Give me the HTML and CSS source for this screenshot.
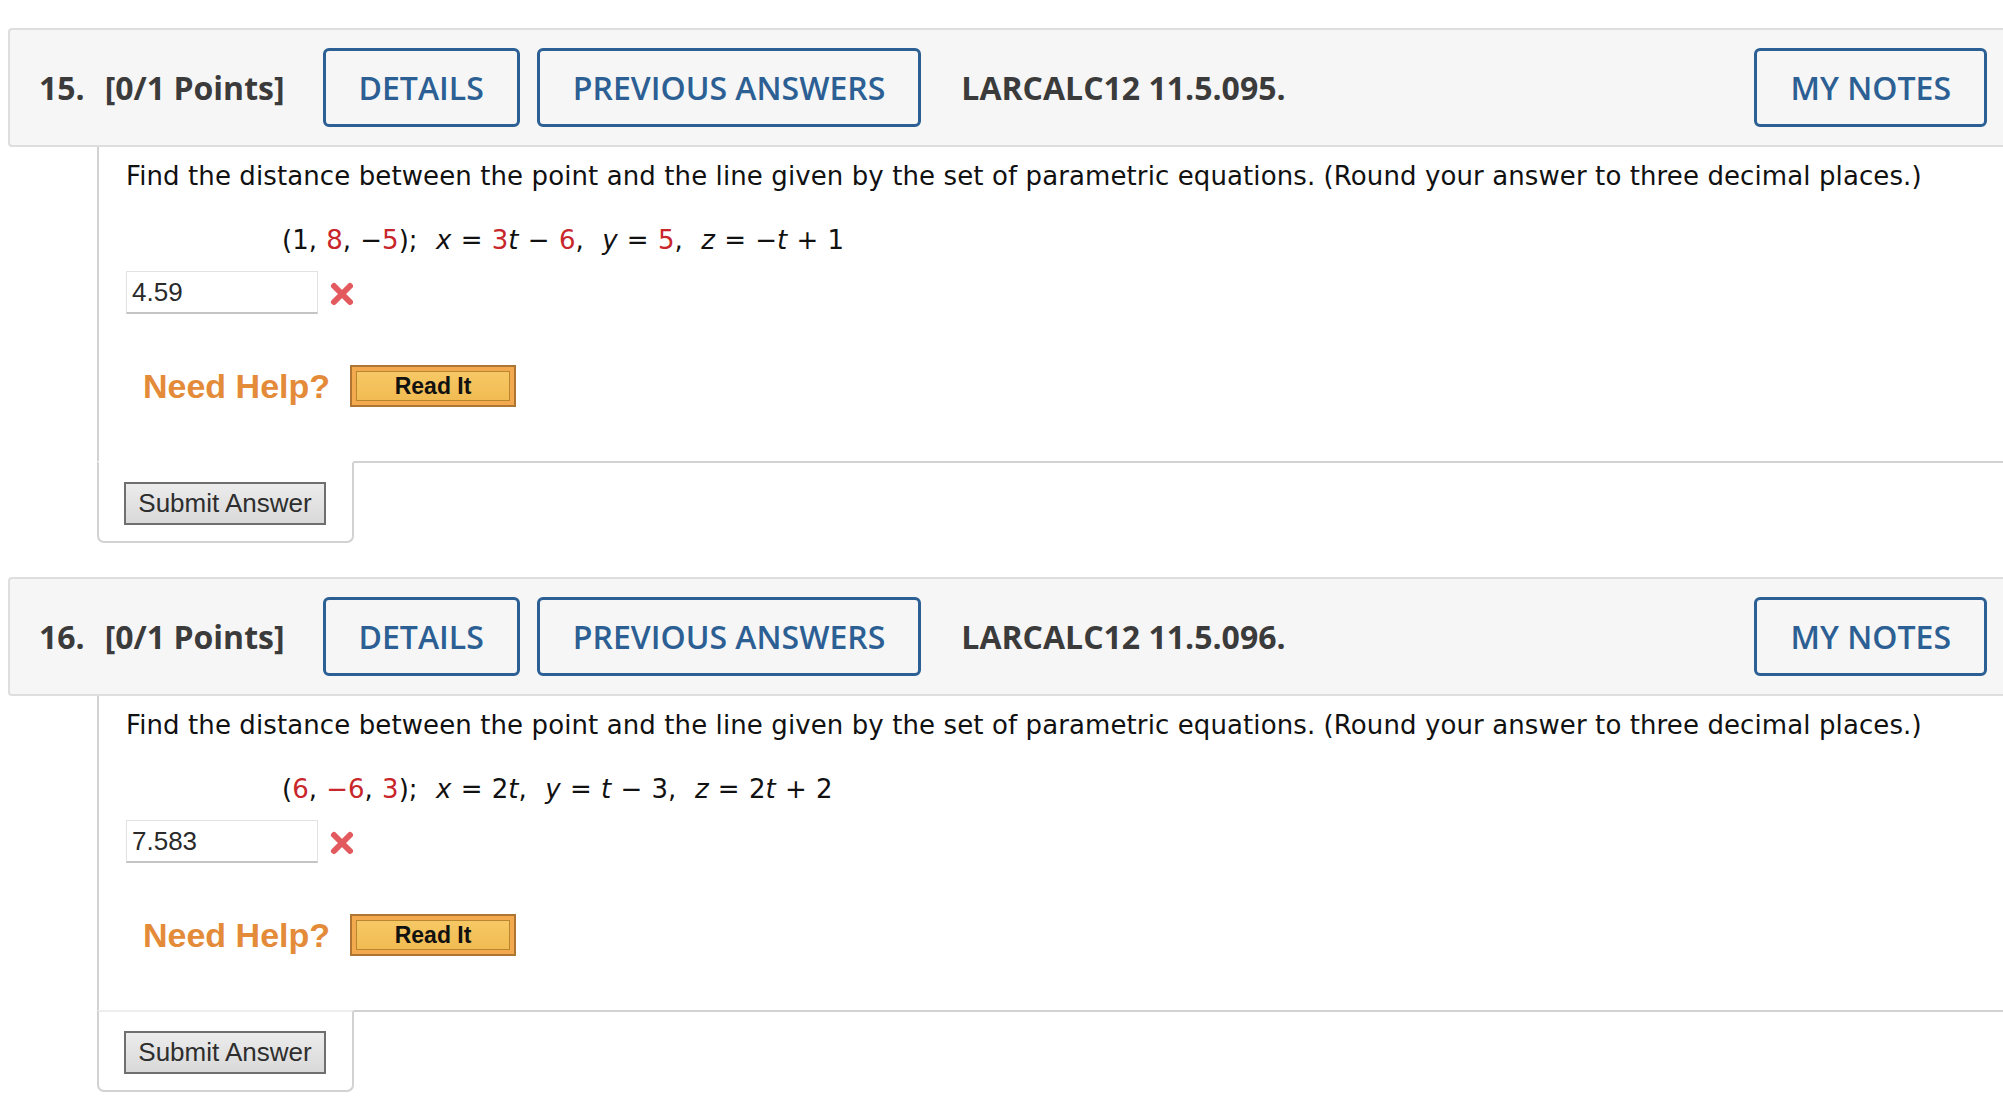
FILE: index.html
```html
<!DOCTYPE html>
<html>
<head>
<meta charset="utf-8">
<link rel="stylesheet" href="styles.css">
</head>
<body>
<div class="page">
  <div class="question">
    <div class="qhead">
      <span class="qnum">15.</span>
      <span class="qpts">[0/1 Points]</span>
      <span class="btn btn-details">DETAILS</span>
      <span class="btn btn-prev">PREVIOUS ANSWERS</span>
      <span class="qcode">LARCALC12 11.5.095.</span>
      <span class="btn btn-notes">MY NOTES</span>
    </div>
    <div class="qbody">
      <div class="qcontent">
        <p class="qtext">Find the distance between the point and the line given by the set of parametric equations. (Round your answer to three decimal places.)</p>
        <p class="eqn">(1, <span class="r">8</span>, −<span class="r">5</span>);&nbsp; <i>x</i> = <span class="r">3</span><i>t</i> − <span class="r">6</span>,&nbsp; <i>y</i> = <span class="r">5</span>,&nbsp; <i>z</i> = −<i>t</i> + 1</p>
        <div class="answer">
          <div class="inp">4.59</div>
          <svg class="wrong" viewBox="0 0 26 26" width="26" height="26"><path d="M5 5 L21 21 M21 5 L5 21" stroke="#e35a5e" stroke-width="6" stroke-linecap="round"/></svg>
        </div>
        <div class="help">
          <span class="needhelp">Need Help?</span>
          <span class="readit"><span class="readit-in">Read It</span></span>
        </div>
      </div>
      <div class="qfoot">
        <div class="submit-cell"><span class="submit">Submit Answer</span></div>
        <div class="filler"></div>
      </div>
    </div>
  </div>

  <div class="question">
    <div class="qhead">
      <span class="qnum">16.</span>
      <span class="qpts">[0/1 Points]</span>
      <span class="btn btn-details">DETAILS</span>
      <span class="btn btn-prev">PREVIOUS ANSWERS</span>
      <span class="qcode">LARCALC12 11.5.096.</span>
      <span class="btn btn-notes">MY NOTES</span>
    </div>
    <div class="qbody">
      <div class="qcontent">
        <p class="qtext">Find the distance between the point and the line given by the set of parametric equations. (Round your answer to three decimal places.)</p>
        <p class="eqn">(<span class="r">6</span>, <span class="r">−6</span>, <span class="r">3</span>);&nbsp; <i>x</i> = 2<i>t</i>,&nbsp; <i>y</i> = <i>t</i> − 3,&nbsp; <i>z</i> = 2<i>t</i> + 2</p>
        <div class="answer">
          <div class="inp">7.583</div>
          <svg class="wrong" viewBox="0 0 26 26" width="26" height="26"><path d="M5 5 L21 21 M21 5 L5 21" stroke="#e35a5e" stroke-width="6" stroke-linecap="round"/></svg>
        </div>
        <div class="help">
          <span class="needhelp">Need Help?</span>
          <span class="readit"><span class="readit-in">Read It</span></span>
        </div>
      </div>
      <div class="qfoot">
        <div class="submit-cell submit-cell-faint"><span class="submit">Submit Answer</span></div>
        <div class="filler"></div>
      </div>
    </div>
  </div>
</div>
</body>
</html>
```

FILE: styles.css
```css
html, body {
  margin: 0;
  padding: 0;
  background: #fff;
  overflow: hidden;
}
.page {
  width: 2003px;
  padding-top: 28px;
}
.question {
  margin-left: 8px;
  margin-bottom: 34px;
}
.qhead {
  display: flex;
  align-items: center;
  height: 115px;
  background: #f6f6f6;
  border: 2px solid #dedede;
  border-right: none;
  border-radius: 4px 0 0 4px;
  padding: 0 16px 0 29px;
  font-family: "Open Sans", sans-serif;
  font-weight: 600;
  font-size: 32px;
  color: #3b3b3b;
}
.qnum,
.qpts,
.qcode {
  font-weight: 700;
}
.qnum {
  margin-right: 20px;
}
.qpts {
  margin-right: 38px;
}
.btn {
  display: flex;
  align-items: center;
  justify-content: center;
  box-sizing: border-box;
  height: 79px;
  border: 3px solid #2c5f93;
  border-radius: 6px;
  color: #2c5f93;
  padding: 0 33px;
}
.btn-details {
  margin-right: 17px;
}
.btn-prev {
  margin-right: 40px;
}
.btn-notes {
  margin-left: auto;
}
.qbody {
  margin-left: 89px;
}
.qcontent {
  border-left: 2px solid #d2d2d2;
  padding: 13px 0 54px 27px;
  font-family: "DejaVu Sans", Verdana, sans-serif;
  color: #111;
}
.qtext {
  margin: 0;
  font-size: 26px;
  line-height: 32px;
  letter-spacing: 0.1px;
}
.eqn {
  margin: 32px 0 0 156px;
  font-size: 26px;
  line-height: 32px;
  word-spacing: 1px;
}
.r {
  color: #c8262b;
}
.answer {
  display: flex;
  align-items: center;
  margin-top: 15px;
}
.inp {
  box-sizing: border-box;
  width: 192px;
  height: 43px;
  border: 1px solid #e2e2e2;
  border-bottom: 2px solid #c4c4c4;
  padding-left: 5px;
  font-family: "Liberation Sans", Arial, sans-serif;
  font-size: 26px;
  line-height: 40px;
  color: #2a2a2a;
}
.wrong {
  margin-left: 11px;
  margin-top: 3px;
}
.help {
  display: flex;
  align-items: center;
  margin-top: 51px;
  margin-left: 17px;
}
.needhelp {
  font-family: "Liberation Sans", Arial, sans-serif;
  font-weight: 700;
  font-size: 34px;
  color: #e48b3a;
  margin-right: 20px;
}
.readit {
  box-sizing: border-box;
  display: flex;
  width: 166px;
  height: 42px;
  border: 2px solid #ae7632;
  background: #f3aa4e;
  padding: 4px;
}
.readit-in {
  flex: 1;
  display: flex;
  align-items: center;
  justify-content: center;
  border: 1px solid #b9852f;
  background: linear-gradient(#f6c865, #f1bb52);
  font-family: "Liberation Sans", Arial, sans-serif;
  font-weight: 700;
  font-size: 23px;
  color: #111;
}
.qfoot {
  display: flex;
}
.submit-cell {
  box-sizing: border-box;
  width: 257px;
  border: 2px solid #d2d2d2;
  border-top: 2px solid transparent;
  border-radius: 0 0 7px 7px;
  padding: 19px 0 16px 25px;
}
.submit-cell-faint {
  border-top-color: #eeeeee;
}
.filler {
  flex: 1;
  border-top: 2px solid #d2d2d2;
}
.submit {
  display: inline-flex;
  align-items: center;
  justify-content: center;
  box-sizing: border-box;
  width: 202px;
  height: 43px;
  border: 2px solid #6f6f6f;
  background: linear-gradient(#ececec, #d9d9d9);
  font-family: "Liberation Sans", Arial, sans-serif;
  font-size: 26px;
  color: #2e2e2e;
}
```
